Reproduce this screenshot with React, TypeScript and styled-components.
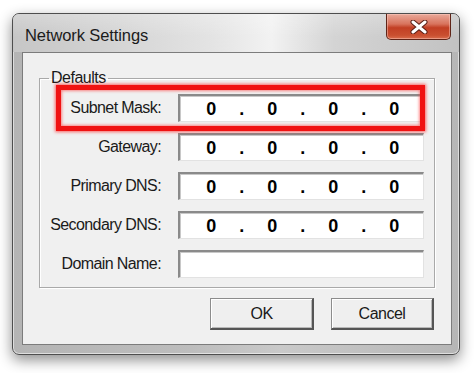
import React from "react";
import styled, { createGlobalStyle } from "styled-components";

const Global = createGlobalStyle`
  html, body { margin: 0; padding: 0; background: #ffffff; }
  body { width: 474px; height: 373px; overflow: hidden; font-family: "Liberation Sans", Arial, sans-serif; }
`;

const Page = styled.div`
  padding: 13px 0 0 12px;
`;

const Window = styled.div`
  width: 446px;
  height: 340px;
  border: 1px solid #4e4e4e;
  border-radius: 7px;
  background: linear-gradient(90deg, #b4b4b4 0%, #bdbdbd 40%, #c9c9c9 60%, #b6b6b6 100%);
  box-shadow: 0 5px 14px rgba(0, 0, 0, 0.45), inset 0 0 0 1px rgba(255, 255, 255, 0.55);
  display: flex;
  flex-direction: column;
`;

const TitleBar = styled.div`
  height: 38px;
  display: flex;
  justify-content: space-between;
  align-items: flex-start;
  border-radius: 6px 6px 0 0;
  background:
    linear-gradient(180deg, rgba(255,255,255,0.25) 0%, rgba(255,255,255,0) 60%),
    linear-gradient(90deg, #c6c6c6 0%, #d2d2d2 20%, #e4e4e4 45%, #f2f2f2 58%, #d4d4d4 72%, #c2c2c2 100%);
`;

const Title = styled.div`
  padding: 12px 0 0 12px;
  font-size: 16.5px;
  color: #1b1b1b;
  letter-spacing: -0.1px;
`;

const CloseButton = styled.div`
  width: 63px;
  height: 25px;
  margin-right: 8px;
  border: 1px solid #5f2418;
  border-top: none;
  border-radius: 0 0 5px 5px;
  background: linear-gradient(180deg, #e9a99a 0%, #d8735d 40%, #c23f24 55%, #c94f30 85%, #d96d4d 100%);
  box-shadow: inset 0 0 0 1px rgba(255, 210, 200, 0.45);
  display: flex;
  align-items: center;
  justify-content: center;
`;

const Client = styled.div`
  flex: 1;
  margin: 0 7px 9px 9px;
  border: 1px solid #7c7c7c;
  background: #f0f0f0;
  display: flex;
  flex-direction: column;
`;

const GroupBox = styled.fieldset`
  margin: 16px 16px 0 16px;
  padding: 7px 10px 9px 0;
  border: 1px solid #a9a9a9;
  box-shadow: 1px 1px 0 #ffffff, inset 1px 1px 0 #ffffff;
  min-width: 0;
`;

const Legend = styled.legend`
  margin-left: 9px;
  padding: 0 2px;
  font-size: 16px;
  line-height: 18px;
  color: #1a1a1a;
  letter-spacing: -0.5px;
`;

const Form = styled.div`
  position: relative;
  display: grid;
  grid-template-columns: 1fr 246px;
  column-gap: 17px;
  row-gap: 11px;
`;

const Label = styled.div`
  text-align: right;
  font-size: 16px;
  line-height: 28px;
  color: #1a1a1a;
  letter-spacing: -0.6px;
  white-space: nowrap;
`;

const Field = styled.div`
  box-sizing: border-box;
  height: 28px;
  background: #ffffff;
  border-top: 2px solid #8a8a8a;
  border-left: 2px solid #8a8a8a;
  border-right: 1px solid #e2e2e2;
  border-bottom: 1px solid #e2e2e2;
  box-shadow: inset 1px 1px 0 #c8c8c8;
  display: grid;
  grid-template-columns: repeat(7, 30.5px);
  padding-left: 16px;
  align-items: center;
`;

const Cell = styled.span<{ $dot?: boolean }>`
  text-align: center;
  font-size: 18px;
  font-weight: ${(p) => (p.$dot ? 700 : 700)};
  color: #000000;
  line-height: 24px;
`;

const Highlight = styled.div`
  position: absolute;
  left: 16px;
  right: -1px;
  top: -9px;
  height: 46px;
  box-sizing: border-box;
  border: 5px solid #f01212;
  box-shadow: 0 0 3px 1px rgba(255, 40, 40, 0.7), inset 0 0 3px 1px rgba(255, 60, 60, 0.6);
  pointer-events: none;
`;

const Buttons = styled.div`
  display: flex;
  justify-content: flex-end;
  gap: 17px;
  margin: 10px 17px 0 0;
`;

const Button = styled.button<{ $w: number }>`
  box-sizing: border-box;
  width: ${(p) => p.$w}px;
  height: 32px;
  padding: 0;
  background: #efefef;
  border-top: 1px solid #8c8c8c;
  border-left: 1px solid #8c8c8c;
  border-right: 2px solid #555555;
  border-bottom: 2px solid #555555;
  box-shadow: inset 1px 1px 0 #ffffff, inset -1px -1px 0 #b8b8b8;
  font-family: "Liberation Sans", Arial, sans-serif;
  font-size: 16px;
  letter-spacing: -0.5px;
  color: #1a1a1a;
`;

const ipRows = ["Subnet Mask:", "Gateway:", "Primary DNS:", "Secondary DNS:"];

function IpField() {
  const cells = ["0", ".", "0", ".", "0", ".", "0"];
  return (
    <Field>
      {cells.map((c, i) => (
        <Cell key={i} $dot={c === "."}>
          {c}
        </Cell>
      ))}
    </Field>
  );
}

export default function App() {
  return (
    <Page>
      <Global />
      <Window>
        <TitleBar>
          <Title>Network Settings</Title>
          <CloseButton>
            <svg width="18" height="14" viewBox="0 0 18 14">
              <path d="M3 2 L15 12 M15 2 L3 12" stroke="#5a1e14" strokeWidth="5" strokeLinecap="round" />
              <path d="M3 2 L15 12 M15 2 L3 12" stroke="#ffffff" strokeWidth="3" strokeLinecap="round" />
            </svg>
          </CloseButton>
        </TitleBar>
        <Client>
          <GroupBox>
            <Legend>Defaults</Legend>
            <Form>
              {ipRows.map((r) => (
                <React.Fragment key={r}>
                  <Label>{r}</Label>
                  <IpField />
                </React.Fragment>
              ))}
              <Label>Domain Name:</Label>
              <Field />
              <Highlight />
            </Form>
          </GroupBox>
          <Buttons>
            <Button $w={104}>OK</Button>
            <Button $w={103}>Cancel</Button>
          </Buttons>
        </Client>
      </Window>
    </Page>
  );
}
